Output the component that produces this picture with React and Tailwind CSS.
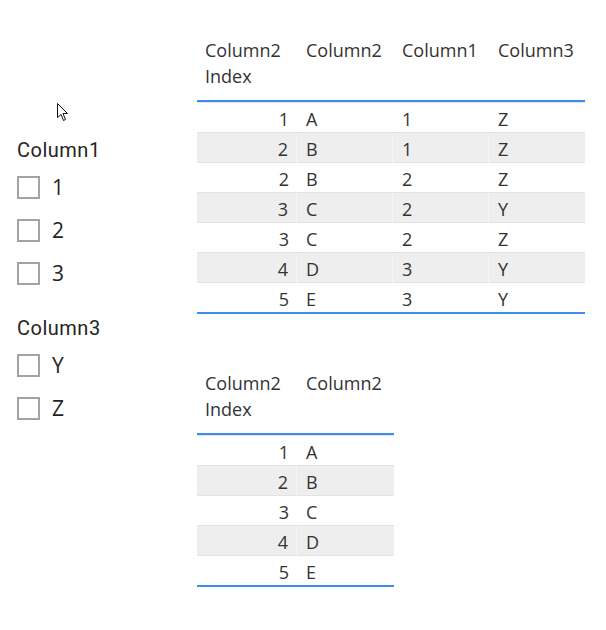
const rowsA = [
  ['1', 'A', '1', 'Z'],
  ['2', 'B', '1', 'Z'],
  ['2', 'B', '2', 'Z'],
  ['3', 'C', '2', 'Y'],
  ['3', 'C', '2', 'Z'],
  ['4', 'D', '3', 'Y'],
  ['5', 'E', '3', 'Y'],
]
const rowsB = [['1', 'A'], ['2', 'B'], ['3', 'C'], ['4', 'D'], ['5', 'E']]

const Check = ({ label }) => (
  <div className="flex items-center h-[43px]">
    <div className="w-[23px] h-[23px] border-2 border-[#a3a3a3] bg-white"></div>
    <span className="ml-[12px] text-[21px] leading-none text-[#252423]">{label}</span>
  </div>
)

const Slicer = ({ title, items }) => (
  <div className="flex flex-col">
    <div className="font-['Roboto'] text-[20px] tracking-[0.5px] leading-[24px] text-[#252423] mb-[4px]">{title}</div>
    {items.map((i) => <Check key={i} label={i} />)}
  </div>
)

const Table = ({ headers, widths, rows }) => {
  const cols = widths.map((w) => `${w}px`).join(' ')
  return (
    <div style={{ width: widths.reduce((a, b) => a + b, 0) }}>
      <div className="grid border-b-2 border-[#3b8ced] pb-[11px]" style={{ gridTemplateColumns: cols }}>
        {headers.map((h, i) => (
          <div key={i} className={`${i === 0 ? 'pl-[8px]' : 'pl-[9px]'} leading-[26px] text-[18px] text-[#333]`}>
            {h.map((l) => <div key={l}>{l}</div>)}
          </div>
        ))}
      </div>
      {rows.map((r, ri) => (
        <div key={ri} className={`grid h-[30px] items-center border-t border-[#e3e3e3] first:border-t-0 ${ri % 2 ? 'bg-[#eeeeee]' : 'bg-white'}`} style={{ gridTemplateColumns: cols }}>
          {r.map((c, ci) => (
            <div key={ci} className={`h-full flex items-center pt-[3px] text-[18px] text-[#333] ${ci === 0 ? 'justify-end pr-[8px]' : 'pl-[9px]'} ${ci < r.length - 1 && ri % 2 ? 'border-r border-[#f5f5f5]' : ''}`}>{c}</div>
          ))}
        </div>
      ))}
      <div className="h-[2px] bg-[#3b8ced]"></div>
    </div>
  )
}

export default function App() {
  return (
    <div className="relative w-[606px] h-[630px] bg-white flex font-['Open_Sans',sans-serif]">
      <div className="w-[197px] pl-[17px] pt-[138px] flex flex-col gap-[21px]">
        <Slicer title="Column1" items={['1', '2', '3']} />
        <Slicer title="Column3" items={['Y', 'Z']} />
      </div>
      <div className="pt-[37px] flex flex-col gap-[56px]">
        <Table headers={[['Column2', 'Index'], ['Column2'], ['Column1'], ['Column3']]} widths={[100, 96, 96, 96]} rows={rowsA} />
        <Table headers={[['Column2', 'Index'], ['Column2']]} widths={[100, 97]} rows={rowsB} />
      </div>
      <svg className="absolute left-[57px] top-[103px]" width="13" height="19" viewBox="0 0 13 19">
        <path d="M0.5 0.5 L0.5 14.5 L4 11.5 L6.5 17.5 L8.5 16.5 L6 10.5 L10.5 10.5 Z" fill="white" stroke="#111" strokeWidth="1" strokeLinejoin="round" />
      </svg>
    </div>
  )
}
